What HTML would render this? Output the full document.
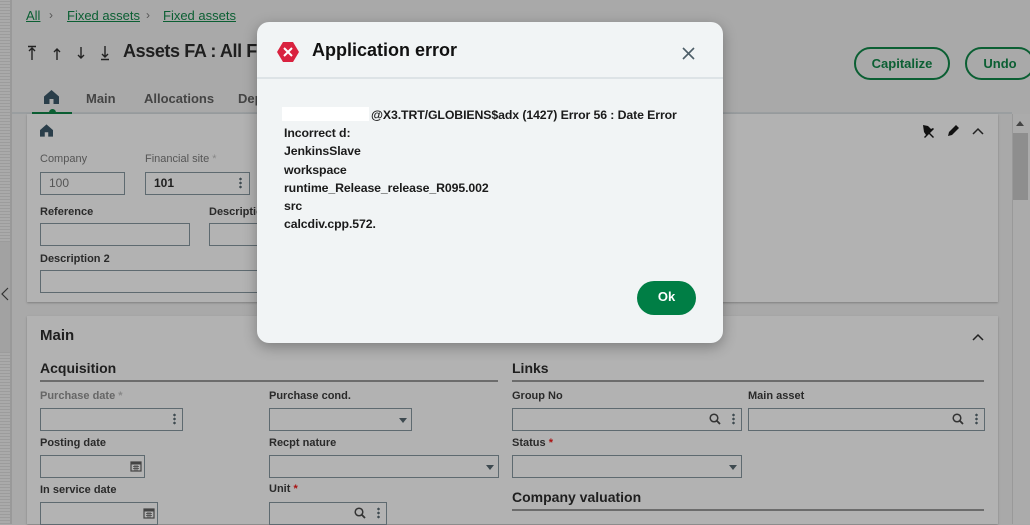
<!DOCTYPE html>
<html><head><meta charset="utf-8"><style>
*{box-sizing:border-box;margin:0;padding:0}
body{width:1030px;height:524px;overflow:hidden;background:#a9a9a9;font-family:"Liberation Sans",sans-serif;position:relative;color:#1f1f1f}
.a{position:absolute}
.lbl{position:absolute;font-size:11px;font-weight:bold;color:#2a2a2a;white-space:nowrap}
.in{position:absolute;border:1px solid #5e6a70;background:#b3b3b3;height:23px}
.card{position:absolute;background:#b2b2b2;box-shadow:0 1px 2px rgba(0,0,0,.25)}
.dots{position:absolute;width:3px;height:12px;background:radial-gradient(circle,#3e4a50 1.2px,transparent 1.4px) 0 0/3px 4px repeat-y}
.caret{position:absolute;width:0;height:0;border-left:4px solid transparent;border-right:4px solid transparent;border-top:5px solid #3e4a50}
.pill{position:absolute;border:2px solid #0b5f33;border-radius:20px;color:#0b5f33;font-weight:bold;font-size:13px;text-align:center;line-height:29px;height:33px}
.h{position:absolute;font-weight:bold;color:#1f1f1f;white-space:nowrap}
.rule{position:absolute;height:2px;background:#6c6c6c}
</style></head><body>
<svg width="0" height="0" style="position:absolute"><defs>
<symbol id="mag" viewBox="0 0 12 12"><circle cx="5" cy="5" r="3.8" fill="none" stroke="#333" stroke-width="1.5"/><path d="M7.8 7.8L11 11" stroke="#333" stroke-width="1.8"/></symbol>
<symbol id="up" viewBox="0 0 12 8"><path d="M1 7l5-5 5 5" fill="none" stroke="#222" stroke-width="1.5"/></symbol>
<symbol id="cal" viewBox="0 0 12 12"><rect x="1" y="2" width="10" height="9" fill="none" stroke="#444" stroke-width="1.2"/><rect x="1" y="2" width="10" height="2.5" fill="#444"/><path d="M3 6.5h6M3 8.5h6M5 5v6M7 5v6" stroke="#444" stroke-width=".8"/></symbol>
</defs></svg>
<div class="a" style="left:0;top:0;width:10px;height:524px;background:repeating-linear-gradient(0deg,#9c9c9c 0 1px,#aaa 1px 3px)"></div>
<div class="a" style="left:0;top:242px;width:10px;height:110px;background:#a2a2a2"></div>
<svg class="a" style="left:1px;top:287px" width="8" height="14" viewBox="0 0 8 14"><path d="M7 1L1 7l6 6" fill="none" stroke="#333" stroke-width="1.2"/></svg>
<div class="a" style="left:10px;top:0;width:2px;height:524px;background:#999"></div>

<div class="a" style="left:26px;top:8px;font-size:13px;color:#0b5f33;text-decoration:underline">All</div>
<div class="a" style="left:49px;top:8px;font-size:12px;color:#555">›</div>
<div class="a" style="left:67px;top:8px;font-size:13px;color:#0b5f33;text-decoration:underline">Fixed assets</div>
<div class="a" style="left:146px;top:8px;font-size:12px;color:#555">›</div>
<div class="a" style="left:163px;top:8px;font-size:13px;color:#0b5f33;text-decoration:underline">Fixed assets</div>

<svg class="a" style="left:27px;top:45px" width="90" height="16" viewBox="0 0 90 16"><g fill="none" stroke="#222" stroke-width="1.4"><path d="M1 1.5h8M5 3v12M2 6l3-3 3 3"/><path d="M30 4v11M27 7l3-3 3 3"/><path d="M54 2v11M51 10l3 3 3-3"/><path d="M78 1v11M75 9l3 3 3-3M74 14.5h8"/></g></svg>
<div class="h" style="left:123px;top:41px;font-size:18px;letter-spacing:-0.4px">Assets FA : All Fu</div>
<div class="pill" style="left:854px;top:47px;width:96px">Capitalize</div>
<div class="pill" style="left:965px;top:47px;width:70px">Undo</div>

<svg class="a" style="left:44px;top:90px" width="15" height="14" viewBox="0 0 15 14"><path d="M7.5 0L0 6.5V14h5.5V9h4v5H15V6.5z" fill="#2a3e4a"/></svg>
<div class="a" style="left:86px;top:91px;font-size:13px;font-weight:bold;color:#444">Main</div>
<div class="a" style="left:144px;top:91px;font-size:13px;font-weight:bold;color:#444">Allocations</div>
<div class="a" style="left:238px;top:91px;font-size:13px;font-weight:bold;color:#444">Dep</div>
<div class="a" style="left:12px;top:112px;width:1000px;height:2px;background:#9a9ea0"></div>
<div class="a" style="left:32px;top:112px;width:40px;height:2px;background:#0b5f33"></div>
<div class="a" style="left:49px;top:109px;width:7px;height:7px;border-radius:50%;background:#0b5f33"></div>

<div class="card" style="left:27px;top:114px;width:971px;height:188px"></div>
<svg class="a" style="left:40px;top:124px" width="13" height="13" viewBox="0 0 15 14"><path d="M7.5 0L0 6.5V14h5.5V9h4v5H15V6.5z" fill="#2a3e4a"/></svg>
<svg class="a" style="left:922px;top:124px" width="14" height="14" viewBox="0 0 14 14"><path d="M1 1l5 1 3 3 2-1 1 1-4 4 4 4-1 1-4-4-4 4-1-1 2-2-2-3z" fill="#111"/></svg>
<svg class="a" style="left:946px;top:124px" width="14" height="14" viewBox="0 0 14 14"><path d="M2 12l1-4 7-7 3 3-7 7z" fill="#111"/></svg>
<svg class="a" style="left:972px;top:127px" width="12" height="8"><use href="#up"/></svg>
<div class="lbl" style="left:40px;top:153px;color:#555;font-weight:normal">Company</div>
<div class="in" style="left:40px;top:172px;width:85px;font-size:12px;color:#555;padding:3px 8px">100</div>
<div class="lbl" style="left:145px;top:153px;color:#555;font-weight:normal">Financial site <span style="color:#888">*</span></div>
<div class="in" style="left:145px;top:172px;width:105px;font-size:12px;font-weight:bold;padding:3px 8px">101</div>
<div class="dots" style="left:239px;top:177px"></div>
<div class="lbl" style="left:40px;top:206px">Reference</div>
<div class="in" style="left:40px;top:223px;width:150px"></div>
<div class="lbl" style="left:209px;top:206px">Description</div>
<div class="in" style="left:209px;top:223px;width:60px"></div>
<div class="lbl" style="left:40px;top:253px">Description 2</div>
<div class="in" style="left:40px;top:270px;width:230px"></div>

<div class="a" style="left:1012px;top:114px;width:18px;height:410px;background:#ababab"></div>
<div class="a" style="left:1012px;top:114px;width:1px;height:410px;background:#999"></div>
<div class="a" style="left:1013px;top:133px;width:15px;height:67px;background:#8e8e8e"></div>
<div class="a" style="left:1016px;top:121px;border-left:4px solid transparent;border-right:4px solid transparent;border-bottom:5px solid #444"></div>

<div class="card" style="left:27px;top:316px;width:971px;height:208px"></div>
<div class="h" style="left:40px;top:327px;font-size:15px">Main</div>
<svg class="a" style="left:972px;top:333px" width="12" height="8"><use href="#up"/></svg>
<div class="h" style="left:40px;top:360px;font-size:14px">Acquisition</div>
<div class="rule" style="left:40px;top:380px;width:458px"></div>
<div class="h" style="left:512px;top:360px;font-size:14px">Links</div>
<div class="rule" style="left:512px;top:380px;width:472px"></div>

<div class="lbl" style="left:40px;top:390px;color:#666">Purchase date <span style="color:#888">*</span></div>
<div class="in" style="left:40px;top:408px;width:143px"></div><div class="dots" style="left:173px;top:413px"></div>
<div class="lbl" style="left:269px;top:390px">Purchase cond.</div>
<div class="in" style="left:269px;top:408px;width:143px"></div><div class="caret" style="left:399px;top:418px"></div>
<div class="lbl" style="left:40px;top:437px">Posting date</div>
<div class="in" style="left:40px;top:455px;width:105px"></div>
<svg class="a" style="left:130px;top:460px" width="12" height="12"><use href="#cal"/></svg>
<div class="lbl" style="left:269px;top:437px">Recpt nature</div>
<div class="in" style="left:269px;top:455px;width:230px"></div><div class="caret" style="left:486px;top:465px"></div>
<div class="lbl" style="left:40px;top:484px">In service date</div>
<div class="in" style="left:40px;top:502px;width:118px"></div>
<svg class="a" style="left:143px;top:507px" width="12" height="12"><use href="#cal"/></svg>
<div class="lbl" style="left:269px;top:483px">Unit <span style="color:#a11">*</span></div>
<div class="in" style="left:269px;top:502px;width:118px"></div>
<svg class="a" style="left:354px;top:507px" width="12" height="12"><use href="#mag"/></svg><div class="dots" style="left:377px;top:507px"></div>

<div class="lbl" style="left:512px;top:390px">Group No</div>
<div class="in" style="left:512px;top:408px;width:230px"></div>
<svg class="a" style="left:709px;top:413px" width="12" height="12"><use href="#mag"/></svg><div class="dots" style="left:732px;top:413px"></div>
<div class="lbl" style="left:748px;top:390px">Main asset</div>
<div class="in" style="left:748px;top:408px;width:237px"></div>
<svg class="a" style="left:952px;top:413px" width="12" height="12"><use href="#mag"/></svg><div class="dots" style="left:975px;top:413px"></div>
<div class="lbl" style="left:512px;top:437px">Status <span style="color:#a11">*</span></div>
<div class="in" style="left:512px;top:455px;width:230px"></div><div class="caret" style="left:729px;top:465px"></div>
<div class="h" style="left:512px;top:489px;font-size:14px">Company valuation</div>
<div class="rule" style="left:512px;top:509px;width:472px"></div>

<!-- dialog -->
<div class="a" style="left:257px;top:22px;width:466px;height:321px;background:#f1f4f5;border-radius:12px;box-shadow:0 4px 14px rgba(0,0,0,.3)">
  <svg class="a" style="left:20px;top:20px" width="22" height="20" viewBox="0 0 22 20"><path d="M6 0h10l6 10-6 10H6L0 10z" fill="#d9223f"/><path d="M7 6l8 8M15 6l-8 8" stroke="#fff" stroke-width="2"/></svg>
  <div class="h" style="left:55px;top:18px;font-size:18px;color:#111">Application error</div>
  <svg class="a" style="left:425px;top:25px" width="13" height="13" viewBox="0 0 13 13"><path d="M1 1l11 11M12 1L1 12" stroke="#4d5e68" stroke-width="1.6"/></svg>
  <div class="a" style="left:0;top:55px;width:466px;height:2px;background:#dde3e6"></div>
  <div class="a" style="left:25px;top:85px;width:87px;height:14px;background:#fff"></div>
  <div class="a" style="left:27px;top:84px;font-size:12.3px;font-weight:bold;color:#1b1b1b;line-height:18.2px;white-space:nowrap;letter-spacing:-0.1px">
    <div style="padding-left:87px">@X3.TRT/GLOBIENS$adx (1427) Error 56 : Date Error</div>
    <div>Incorrect d:</div><div>JenkinsSlave</div><div>workspace</div><div>runtime_Release_release_R095.002</div><div>src</div><div>calcdiv.cpp.572.</div>
  </div>
  <div class="a" style="left:380px;top:259px;width:59px;height:34px;border-radius:17px;background:#007e45;color:#fff;font-weight:bold;font-size:13px;text-align:center;line-height:32px">Ok</div>
</div>
</body></html>
